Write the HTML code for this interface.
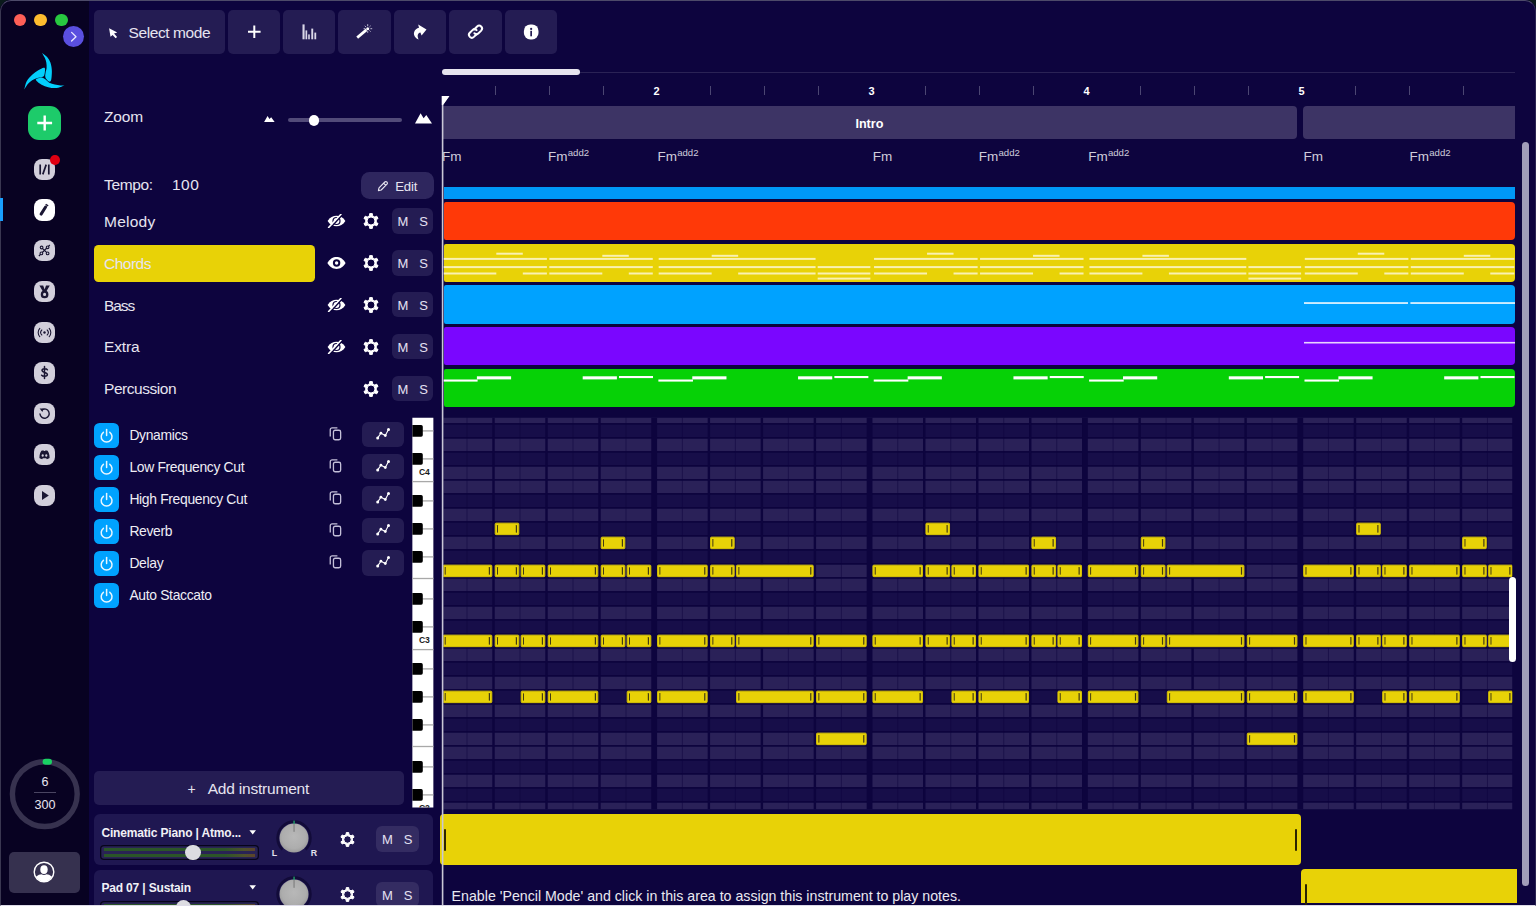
<!DOCTYPE html>
<html lang="en"><head><meta charset="utf-8"><title>Composition editor</title>
<style>
html,body{margin:0;padding:0}
body{width:1536px;height:906px;overflow:hidden;background:#0b1a1c;position:relative;
 font-family:"Liberation Sans",sans-serif;color:#ecebf3}
.abs{position:absolute}
#win{position:absolute;left:0;top:0;width:1536px;height:906px;background:#0d043e;border-radius:11px 11px 0 0;overflow:hidden}
.frame{position:absolute;left:0;top:0;width:1536px;height:906px;box-sizing:border-box;border-radius:11px 11px 0 0;
 border-top:1.3px solid #4d4a69;border-left:1.2px solid #3a3751;border-right:1.2px solid #2b2552;border-bottom:1.4px solid #dddbe8;z-index:60;pointer-events:none}
.rn{font-weight:bold;font-size:11px;line-height:14px;text-align:center;color:#fff}
.sec{background:#3d3465;display:flex;align-items:center;justify-content:center}
.sec span{font-weight:bold;font-size:12.6px;color:#fff;position:relative;left:-0.6px;top:1.9px}
.ch{font-size:13.5px;line-height:16px;color:#cfcddb;white-space:nowrap}
.ch sup{font-size:9.6px;line-height:0;vertical-align:baseline;position:relative;top:-4.6px;left:0.2px}
.hint{font-size:14.2px;line-height:16px;color:#e9e8f0;white-space:nowrap}

.tb{position:absolute;top:10.4px;height:43.6px;width:52.6px;background:#241c53;border-radius:5px}
.tb svg{position:absolute;left:0;top:0}
.lbl{position:absolute;font-size:15.5px;line-height:20px;color:#e6e4f0;white-space:nowrap;letter-spacing:-0.15px}
.msb{border-radius:6px;color:#e4e1f2;font-size:13px;line-height:28.4px}
.msb .m{position:absolute;left:5.1px;width:12px;text-align:center}
.msb .s{position:absolute;left:25.7px;width:12px;text-align:center}
.pw{position:absolute;left:94px;width:25.2px;height:25.2px;border-radius:5.5px;background:#00a2ff}
.fx{position:absolute;left:129.4px;font-size:13.9px;line-height:18px;color:#efeef5;white-space:nowrap;letter-spacing:-0.33px}
.gbtn{width:41.8px;height:25.2px;border-radius:6px;background:#241c53}
.card{position:absolute;left:94px;width:339.4px;background:#1f1751;border-radius:6px}
.inm{position:absolute;font-weight:bold;font-size:12px;line-height:16px;color:#f1f0f6;white-space:nowrap;letter-spacing:-0.16px}
.lr{position:absolute;font-weight:bold;font-size:8.8px;line-height:10px;color:#e4e2ee}

#side{position:absolute;left:0;top:0;width:88.8px;height:906px;background:#080222}
.sq{position:absolute;left:33.9px;width:20.9px;height:21.4px;border-radius:8px;background:#d2cfdb}
.sq svg{position:absolute;left:0;top:0}
.cnt{position:absolute;left:24px;width:42px;text-align:center;font-size:12.6px;line-height:14px;color:#e8e6f0}
</style></head><body>
<div id="win">
<svg class="abs" style="left:0;top:0" width="1536" height="906" viewBox="0 0 1536 906">
<defs><clipPath id="gc"><rect x="443.4" y="417.8" width="1068.9" height="391.5"/></clipPath></defs>
<g clip-path="url(#gc)">
<rect x="443" y="802.75" width="1075" height="12.3" fill="#2a2158"/>
<rect x="443" y="788.75" width="1075" height="12.3" fill="#170e49"/>
<rect x="443" y="774.75" width="1075" height="12.3" fill="#2a2158"/>
<rect x="443" y="760.75" width="1075" height="12.3" fill="#170e49"/>
<rect x="443" y="746.75" width="1075" height="12.3" fill="#2a2158"/>
<rect x="443" y="732.75" width="1075" height="12.3" fill="#2a2158"/>
<rect x="443" y="718.75" width="1075" height="12.3" fill="#170e49"/>
<rect x="443" y="704.75" width="1075" height="12.3" fill="#2a2158"/>
<rect x="443" y="690.75" width="1075" height="12.3" fill="#170e49"/>
<rect x="443" y="676.75" width="1075" height="12.3" fill="#2a2158"/>
<rect x="443" y="662.75" width="1075" height="12.3" fill="#170e49"/>
<rect x="443" y="648.75" width="1075" height="12.3" fill="#2a2158"/>
<rect x="443" y="634.75" width="1075" height="12.3" fill="#2a2158"/>
<rect x="443" y="620.75" width="1075" height="12.3" fill="#170e49"/>
<rect x="443" y="606.75" width="1075" height="12.3" fill="#2a2158"/>
<rect x="443" y="592.75" width="1075" height="12.3" fill="#170e49"/>
<rect x="443" y="578.75" width="1075" height="12.3" fill="#2a2158"/>
<rect x="443" y="564.75" width="1075" height="12.3" fill="#2a2158"/>
<rect x="443" y="550.75" width="1075" height="12.3" fill="#170e49"/>
<rect x="443" y="536.75" width="1075" height="12.3" fill="#2a2158"/>
<rect x="443" y="522.75" width="1075" height="12.3" fill="#170e49"/>
<rect x="443" y="508.75" width="1075" height="12.3" fill="#2a2158"/>
<rect x="443" y="494.75" width="1075" height="12.3" fill="#170e49"/>
<rect x="443" y="480.75" width="1075" height="12.3" fill="#2a2158"/>
<rect x="443" y="466.75" width="1075" height="12.3" fill="#2a2158"/>
<rect x="443" y="452.75" width="1075" height="12.3" fill="#170e49"/>
<rect x="443" y="438.75" width="1075" height="12.3" fill="#2a2158"/>
<rect x="443" y="424.75" width="1075" height="12.3" fill="#170e49"/>
<rect x="443" y="410.75" width="1075" height="12.3" fill="#2a2158"/>
<rect x="466.5" y="410" width="1" height="410" fill="#0d043e" fill-opacity="0.5"/>
<rect x="492.3" y="410" width="2.4" height="410" fill="#0d043e"/>
<rect x="519.5" y="410" width="1" height="410" fill="#0d043e" fill-opacity="0.5"/>
<rect x="545.3" y="410" width="2.4" height="410" fill="#0d043e"/>
<rect x="572.5" y="410" width="1" height="410" fill="#0d043e" fill-opacity="0.5"/>
<rect x="598.3" y="410" width="2.4" height="410" fill="#0d043e"/>
<rect x="625.5" y="410" width="1" height="410" fill="#0d043e" fill-opacity="0.5"/>
<rect x="651.3" y="410" width="5.77" height="410" fill="#0d043e"/>
<rect x="681.87" y="410" width="1" height="410" fill="#0d043e" fill-opacity="0.5"/>
<rect x="707.67" y="410" width="2.4" height="410" fill="#0d043e"/>
<rect x="734.87" y="410" width="1" height="410" fill="#0d043e" fill-opacity="0.5"/>
<rect x="760.67" y="410" width="2.4" height="410" fill="#0d043e"/>
<rect x="787.87" y="410" width="1" height="410" fill="#0d043e" fill-opacity="0.5"/>
<rect x="813.67" y="410" width="2.4" height="410" fill="#0d043e"/>
<rect x="840.87" y="410" width="1" height="410" fill="#0d043e" fill-opacity="0.5"/>
<rect x="866.67" y="410" width="5.77" height="410" fill="#0d043e"/>
<rect x="897.24" y="410" width="1" height="410" fill="#0d043e" fill-opacity="0.5"/>
<rect x="923.04" y="410" width="2.4" height="410" fill="#0d043e"/>
<rect x="950.24" y="410" width="1" height="410" fill="#0d043e" fill-opacity="0.5"/>
<rect x="976.04" y="410" width="2.4" height="410" fill="#0d043e"/>
<rect x="1003.24" y="410" width="1" height="410" fill="#0d043e" fill-opacity="0.5"/>
<rect x="1029.04" y="410" width="2.4" height="410" fill="#0d043e"/>
<rect x="1056.24" y="410" width="1" height="410" fill="#0d043e" fill-opacity="0.5"/>
<rect x="1082.04" y="410" width="5.77" height="410" fill="#0d043e"/>
<rect x="1112.61" y="410" width="1" height="410" fill="#0d043e" fill-opacity="0.5"/>
<rect x="1138.41" y="410" width="2.4" height="410" fill="#0d043e"/>
<rect x="1165.61" y="410" width="1" height="410" fill="#0d043e" fill-opacity="0.5"/>
<rect x="1191.41" y="410" width="2.4" height="410" fill="#0d043e"/>
<rect x="1218.61" y="410" width="1" height="410" fill="#0d043e" fill-opacity="0.5"/>
<rect x="1244.41" y="410" width="2.4" height="410" fill="#0d043e"/>
<rect x="1271.61" y="410" width="1" height="410" fill="#0d043e" fill-opacity="0.5"/>
<rect x="1297.41" y="410" width="5.77" height="410" fill="#0d043e"/>
<rect x="1327.98" y="410" width="1" height="410" fill="#0d043e" fill-opacity="0.5"/>
<rect x="1353.78" y="410" width="2.4" height="410" fill="#0d043e"/>
<rect x="1380.98" y="410" width="1" height="410" fill="#0d043e" fill-opacity="0.5"/>
<rect x="1406.78" y="410" width="2.4" height="410" fill="#0d043e"/>
<rect x="1433.98" y="410" width="1" height="410" fill="#0d043e" fill-opacity="0.5"/>
<rect x="1459.78" y="410" width="2.4" height="410" fill="#0d043e"/>
<rect x="1486.98" y="410" width="1" height="410" fill="#0d043e" fill-opacity="0.5"/>
<rect x="1512.78" y="410" width="5.77" height="410" fill="#0d043e"/>
<rect x="1543.35" y="410" width="1" height="410" fill="#0d043e" fill-opacity="0.5"/>
</g>
<g clip-path="url(#gc)">
<rect x="495.2" y="523.15" width="23.6" height="11.5" rx="0.9" fill="#e8d207" stroke="#d3bf04" stroke-width="1"/>
<rect x="497" y="525.1" width="1" height="7.6" rx="0.4" fill="#423a12"/>
<rect x="515.8" y="525.1" width="1.2" height="7.6" rx="0.4" fill="#423a12"/>
<rect x="601.2" y="537.15" width="23.6" height="11.5" rx="0.9" fill="#e8d207" stroke="#d3bf04" stroke-width="1"/>
<rect x="603" y="539.1" width="1" height="7.6" rx="0.4" fill="#423a12"/>
<rect x="621.8" y="539.1" width="1.2" height="7.6" rx="0.4" fill="#423a12"/>
<rect x="710.57" y="537.15" width="23.6" height="11.5" rx="0.9" fill="#e8d207" stroke="#d3bf04" stroke-width="1"/>
<rect x="712.37" y="539.1" width="1" height="7.6" rx="0.4" fill="#423a12"/>
<rect x="731.17" y="539.1" width="1.2" height="7.6" rx="0.4" fill="#423a12"/>
<rect x="442.9" y="565.15" width="48.9" height="11.5" rx="0.9" fill="#e8d207" stroke="#d3bf04" stroke-width="1"/>
<rect x="444.7" y="567.1" width="1" height="7.6" rx="0.4" fill="#423a12"/>
<rect x="488.8" y="567.1" width="1.2" height="7.6" rx="0.4" fill="#423a12"/>
<rect x="495.2" y="565.15" width="23.6" height="11.5" rx="0.9" fill="#e8d207" stroke="#d3bf04" stroke-width="1"/>
<rect x="497" y="567.1" width="1" height="7.6" rx="0.4" fill="#423a12"/>
<rect x="515.8" y="567.1" width="1.2" height="7.6" rx="0.4" fill="#423a12"/>
<rect x="521.2" y="565.15" width="23.6" height="11.5" rx="0.9" fill="#e8d207" stroke="#d3bf04" stroke-width="1"/>
<rect x="523" y="567.1" width="1" height="7.6" rx="0.4" fill="#423a12"/>
<rect x="541.8" y="567.1" width="1.2" height="7.6" rx="0.4" fill="#423a12"/>
<rect x="548.2" y="565.15" width="49.6" height="11.5" rx="0.9" fill="#e8d207" stroke="#d3bf04" stroke-width="1"/>
<rect x="550" y="567.1" width="1" height="7.6" rx="0.4" fill="#423a12"/>
<rect x="594.8" y="567.1" width="1.2" height="7.6" rx="0.4" fill="#423a12"/>
<rect x="601.2" y="565.15" width="23.6" height="11.5" rx="0.9" fill="#e8d207" stroke="#d3bf04" stroke-width="1"/>
<rect x="603" y="567.1" width="1" height="7.6" rx="0.4" fill="#423a12"/>
<rect x="621.8" y="567.1" width="1.2" height="7.6" rx="0.4" fill="#423a12"/>
<rect x="627.2" y="565.15" width="23.6" height="11.5" rx="0.9" fill="#e8d207" stroke="#d3bf04" stroke-width="1"/>
<rect x="629" y="567.1" width="1" height="7.6" rx="0.4" fill="#423a12"/>
<rect x="647.8" y="567.1" width="1.2" height="7.6" rx="0.4" fill="#423a12"/>
<rect x="657.57" y="565.15" width="49.6" height="11.5" rx="0.9" fill="#e8d207" stroke="#d3bf04" stroke-width="1"/>
<rect x="659.37" y="567.1" width="1" height="7.6" rx="0.4" fill="#423a12"/>
<rect x="704.17" y="567.1" width="1.2" height="7.6" rx="0.4" fill="#423a12"/>
<rect x="710.57" y="565.15" width="23.6" height="11.5" rx="0.9" fill="#e8d207" stroke="#d3bf04" stroke-width="1"/>
<rect x="712.37" y="567.1" width="1" height="7.6" rx="0.4" fill="#423a12"/>
<rect x="731.17" y="567.1" width="1.2" height="7.6" rx="0.4" fill="#423a12"/>
<rect x="736.57" y="565.15" width="76.6" height="11.5" rx="0.9" fill="#e8d207" stroke="#d3bf04" stroke-width="1"/>
<rect x="738.37" y="567.1" width="1" height="7.6" rx="0.4" fill="#423a12"/>
<rect x="810.17" y="567.1" width="1.2" height="7.6" rx="0.4" fill="#423a12"/>
<rect x="442.9" y="635.15" width="48.9" height="11.5" rx="0.9" fill="#e8d207" stroke="#d3bf04" stroke-width="1"/>
<rect x="444.7" y="637.1" width="1" height="7.6" rx="0.4" fill="#423a12"/>
<rect x="488.8" y="637.1" width="1.2" height="7.6" rx="0.4" fill="#423a12"/>
<rect x="495.2" y="635.15" width="23.6" height="11.5" rx="0.9" fill="#e8d207" stroke="#d3bf04" stroke-width="1"/>
<rect x="497" y="637.1" width="1" height="7.6" rx="0.4" fill="#423a12"/>
<rect x="515.8" y="637.1" width="1.2" height="7.6" rx="0.4" fill="#423a12"/>
<rect x="521.2" y="635.15" width="23.6" height="11.5" rx="0.9" fill="#e8d207" stroke="#d3bf04" stroke-width="1"/>
<rect x="523" y="637.1" width="1" height="7.6" rx="0.4" fill="#423a12"/>
<rect x="541.8" y="637.1" width="1.2" height="7.6" rx="0.4" fill="#423a12"/>
<rect x="548.2" y="635.15" width="49.6" height="11.5" rx="0.9" fill="#e8d207" stroke="#d3bf04" stroke-width="1"/>
<rect x="550" y="637.1" width="1" height="7.6" rx="0.4" fill="#423a12"/>
<rect x="594.8" y="637.1" width="1.2" height="7.6" rx="0.4" fill="#423a12"/>
<rect x="601.2" y="635.15" width="23.6" height="11.5" rx="0.9" fill="#e8d207" stroke="#d3bf04" stroke-width="1"/>
<rect x="603" y="637.1" width="1" height="7.6" rx="0.4" fill="#423a12"/>
<rect x="621.8" y="637.1" width="1.2" height="7.6" rx="0.4" fill="#423a12"/>
<rect x="627.2" y="635.15" width="23.6" height="11.5" rx="0.9" fill="#e8d207" stroke="#d3bf04" stroke-width="1"/>
<rect x="629" y="637.1" width="1" height="7.6" rx="0.4" fill="#423a12"/>
<rect x="647.8" y="637.1" width="1.2" height="7.6" rx="0.4" fill="#423a12"/>
<rect x="657.57" y="635.15" width="49.6" height="11.5" rx="0.9" fill="#e8d207" stroke="#d3bf04" stroke-width="1"/>
<rect x="659.37" y="637.1" width="1" height="7.6" rx="0.4" fill="#423a12"/>
<rect x="704.17" y="637.1" width="1.2" height="7.6" rx="0.4" fill="#423a12"/>
<rect x="710.57" y="635.15" width="23.6" height="11.5" rx="0.9" fill="#e8d207" stroke="#d3bf04" stroke-width="1"/>
<rect x="712.37" y="637.1" width="1" height="7.6" rx="0.4" fill="#423a12"/>
<rect x="731.17" y="637.1" width="1.2" height="7.6" rx="0.4" fill="#423a12"/>
<rect x="736.57" y="635.15" width="76.6" height="11.5" rx="0.9" fill="#e8d207" stroke="#d3bf04" stroke-width="1"/>
<rect x="738.37" y="637.1" width="1" height="7.6" rx="0.4" fill="#423a12"/>
<rect x="810.17" y="637.1" width="1.2" height="7.6" rx="0.4" fill="#423a12"/>
<rect x="816.57" y="635.15" width="49.6" height="11.5" rx="0.9" fill="#e8d207" stroke="#d3bf04" stroke-width="1"/>
<rect x="818.37" y="637.1" width="1" height="7.6" rx="0.4" fill="#423a12"/>
<rect x="863.17" y="637.1" width="1.2" height="7.6" rx="0.4" fill="#423a12"/>
<rect x="442.9" y="691.15" width="48.9" height="11.5" rx="0.9" fill="#e8d207" stroke="#d3bf04" stroke-width="1"/>
<rect x="444.7" y="693.1" width="1" height="7.6" rx="0.4" fill="#423a12"/>
<rect x="488.8" y="693.1" width="1.2" height="7.6" rx="0.4" fill="#423a12"/>
<rect x="521.2" y="691.15" width="23.6" height="11.5" rx="0.9" fill="#e8d207" stroke="#d3bf04" stroke-width="1"/>
<rect x="523" y="693.1" width="1" height="7.6" rx="0.4" fill="#423a12"/>
<rect x="541.8" y="693.1" width="1.2" height="7.6" rx="0.4" fill="#423a12"/>
<rect x="548.2" y="691.15" width="49.6" height="11.5" rx="0.9" fill="#e8d207" stroke="#d3bf04" stroke-width="1"/>
<rect x="550" y="693.1" width="1" height="7.6" rx="0.4" fill="#423a12"/>
<rect x="594.8" y="693.1" width="1.2" height="7.6" rx="0.4" fill="#423a12"/>
<rect x="627.2" y="691.15" width="23.6" height="11.5" rx="0.9" fill="#e8d207" stroke="#d3bf04" stroke-width="1"/>
<rect x="629" y="693.1" width="1" height="7.6" rx="0.4" fill="#423a12"/>
<rect x="647.8" y="693.1" width="1.2" height="7.6" rx="0.4" fill="#423a12"/>
<rect x="657.57" y="691.15" width="49.6" height="11.5" rx="0.9" fill="#e8d207" stroke="#d3bf04" stroke-width="1"/>
<rect x="659.37" y="693.1" width="1" height="7.6" rx="0.4" fill="#423a12"/>
<rect x="704.17" y="693.1" width="1.2" height="7.6" rx="0.4" fill="#423a12"/>
<rect x="736.57" y="691.15" width="76.6" height="11.5" rx="0.9" fill="#e8d207" stroke="#d3bf04" stroke-width="1"/>
<rect x="738.37" y="693.1" width="1" height="7.6" rx="0.4" fill="#423a12"/>
<rect x="810.17" y="693.1" width="1.2" height="7.6" rx="0.4" fill="#423a12"/>
<rect x="816.57" y="691.15" width="49.6" height="11.5" rx="0.9" fill="#e8d207" stroke="#d3bf04" stroke-width="1"/>
<rect x="818.37" y="693.1" width="1" height="7.6" rx="0.4" fill="#423a12"/>
<rect x="863.17" y="693.1" width="1.2" height="7.6" rx="0.4" fill="#423a12"/>
<rect x="816.57" y="733.15" width="49.6" height="11.5" rx="0.9" fill="#e8d207" stroke="#d3bf04" stroke-width="1"/>
<rect x="818.37" y="735.1" width="1" height="7.6" rx="0.4" fill="#423a12"/>
<rect x="863.17" y="735.1" width="1.2" height="7.6" rx="0.4" fill="#423a12"/>
<rect x="925.94" y="523.15" width="23.6" height="11.5" rx="0.9" fill="#e8d207" stroke="#d3bf04" stroke-width="1"/>
<rect x="927.74" y="525.1" width="1" height="7.6" rx="0.4" fill="#423a12"/>
<rect x="946.54" y="525.1" width="1.2" height="7.6" rx="0.4" fill="#423a12"/>
<rect x="1031.94" y="537.15" width="23.6" height="11.5" rx="0.9" fill="#e8d207" stroke="#d3bf04" stroke-width="1"/>
<rect x="1033.74" y="539.1" width="1" height="7.6" rx="0.4" fill="#423a12"/>
<rect x="1052.54" y="539.1" width="1.2" height="7.6" rx="0.4" fill="#423a12"/>
<rect x="1141.31" y="537.15" width="23.6" height="11.5" rx="0.9" fill="#e8d207" stroke="#d3bf04" stroke-width="1"/>
<rect x="1143.11" y="539.1" width="1" height="7.6" rx="0.4" fill="#423a12"/>
<rect x="1161.91" y="539.1" width="1.2" height="7.6" rx="0.4" fill="#423a12"/>
<rect x="872.94" y="565.15" width="49.6" height="11.5" rx="0.9" fill="#e8d207" stroke="#d3bf04" stroke-width="1"/>
<rect x="874.74" y="567.1" width="1" height="7.6" rx="0.4" fill="#423a12"/>
<rect x="919.54" y="567.1" width="1.2" height="7.6" rx="0.4" fill="#423a12"/>
<rect x="925.94" y="565.15" width="23.6" height="11.5" rx="0.9" fill="#e8d207" stroke="#d3bf04" stroke-width="1"/>
<rect x="927.74" y="567.1" width="1" height="7.6" rx="0.4" fill="#423a12"/>
<rect x="946.54" y="567.1" width="1.2" height="7.6" rx="0.4" fill="#423a12"/>
<rect x="951.94" y="565.15" width="23.6" height="11.5" rx="0.9" fill="#e8d207" stroke="#d3bf04" stroke-width="1"/>
<rect x="953.74" y="567.1" width="1" height="7.6" rx="0.4" fill="#423a12"/>
<rect x="972.54" y="567.1" width="1.2" height="7.6" rx="0.4" fill="#423a12"/>
<rect x="978.94" y="565.15" width="49.6" height="11.5" rx="0.9" fill="#e8d207" stroke="#d3bf04" stroke-width="1"/>
<rect x="980.74" y="567.1" width="1" height="7.6" rx="0.4" fill="#423a12"/>
<rect x="1025.54" y="567.1" width="1.2" height="7.6" rx="0.4" fill="#423a12"/>
<rect x="1031.94" y="565.15" width="23.6" height="11.5" rx="0.9" fill="#e8d207" stroke="#d3bf04" stroke-width="1"/>
<rect x="1033.74" y="567.1" width="1" height="7.6" rx="0.4" fill="#423a12"/>
<rect x="1052.54" y="567.1" width="1.2" height="7.6" rx="0.4" fill="#423a12"/>
<rect x="1057.94" y="565.15" width="23.6" height="11.5" rx="0.9" fill="#e8d207" stroke="#d3bf04" stroke-width="1"/>
<rect x="1059.74" y="567.1" width="1" height="7.6" rx="0.4" fill="#423a12"/>
<rect x="1078.54" y="567.1" width="1.2" height="7.6" rx="0.4" fill="#423a12"/>
<rect x="1088.31" y="565.15" width="49.6" height="11.5" rx="0.9" fill="#e8d207" stroke="#d3bf04" stroke-width="1"/>
<rect x="1090.11" y="567.1" width="1" height="7.6" rx="0.4" fill="#423a12"/>
<rect x="1134.91" y="567.1" width="1.2" height="7.6" rx="0.4" fill="#423a12"/>
<rect x="1141.31" y="565.15" width="23.6" height="11.5" rx="0.9" fill="#e8d207" stroke="#d3bf04" stroke-width="1"/>
<rect x="1143.11" y="567.1" width="1" height="7.6" rx="0.4" fill="#423a12"/>
<rect x="1161.91" y="567.1" width="1.2" height="7.6" rx="0.4" fill="#423a12"/>
<rect x="1167.31" y="565.15" width="76.6" height="11.5" rx="0.9" fill="#e8d207" stroke="#d3bf04" stroke-width="1"/>
<rect x="1169.11" y="567.1" width="1" height="7.6" rx="0.4" fill="#423a12"/>
<rect x="1240.91" y="567.1" width="1.2" height="7.6" rx="0.4" fill="#423a12"/>
<rect x="872.94" y="635.15" width="49.6" height="11.5" rx="0.9" fill="#e8d207" stroke="#d3bf04" stroke-width="1"/>
<rect x="874.74" y="637.1" width="1" height="7.6" rx="0.4" fill="#423a12"/>
<rect x="919.54" y="637.1" width="1.2" height="7.6" rx="0.4" fill="#423a12"/>
<rect x="925.94" y="635.15" width="23.6" height="11.5" rx="0.9" fill="#e8d207" stroke="#d3bf04" stroke-width="1"/>
<rect x="927.74" y="637.1" width="1" height="7.6" rx="0.4" fill="#423a12"/>
<rect x="946.54" y="637.1" width="1.2" height="7.6" rx="0.4" fill="#423a12"/>
<rect x="951.94" y="635.15" width="23.6" height="11.5" rx="0.9" fill="#e8d207" stroke="#d3bf04" stroke-width="1"/>
<rect x="953.74" y="637.1" width="1" height="7.6" rx="0.4" fill="#423a12"/>
<rect x="972.54" y="637.1" width="1.2" height="7.6" rx="0.4" fill="#423a12"/>
<rect x="978.94" y="635.15" width="49.6" height="11.5" rx="0.9" fill="#e8d207" stroke="#d3bf04" stroke-width="1"/>
<rect x="980.74" y="637.1" width="1" height="7.6" rx="0.4" fill="#423a12"/>
<rect x="1025.54" y="637.1" width="1.2" height="7.6" rx="0.4" fill="#423a12"/>
<rect x="1031.94" y="635.15" width="23.6" height="11.5" rx="0.9" fill="#e8d207" stroke="#d3bf04" stroke-width="1"/>
<rect x="1033.74" y="637.1" width="1" height="7.6" rx="0.4" fill="#423a12"/>
<rect x="1052.54" y="637.1" width="1.2" height="7.6" rx="0.4" fill="#423a12"/>
<rect x="1057.94" y="635.15" width="23.6" height="11.5" rx="0.9" fill="#e8d207" stroke="#d3bf04" stroke-width="1"/>
<rect x="1059.74" y="637.1" width="1" height="7.6" rx="0.4" fill="#423a12"/>
<rect x="1078.54" y="637.1" width="1.2" height="7.6" rx="0.4" fill="#423a12"/>
<rect x="1088.31" y="635.15" width="49.6" height="11.5" rx="0.9" fill="#e8d207" stroke="#d3bf04" stroke-width="1"/>
<rect x="1090.11" y="637.1" width="1" height="7.6" rx="0.4" fill="#423a12"/>
<rect x="1134.91" y="637.1" width="1.2" height="7.6" rx="0.4" fill="#423a12"/>
<rect x="1141.31" y="635.15" width="23.6" height="11.5" rx="0.9" fill="#e8d207" stroke="#d3bf04" stroke-width="1"/>
<rect x="1143.11" y="637.1" width="1" height="7.6" rx="0.4" fill="#423a12"/>
<rect x="1161.91" y="637.1" width="1.2" height="7.6" rx="0.4" fill="#423a12"/>
<rect x="1167.31" y="635.15" width="76.6" height="11.5" rx="0.9" fill="#e8d207" stroke="#d3bf04" stroke-width="1"/>
<rect x="1169.11" y="637.1" width="1" height="7.6" rx="0.4" fill="#423a12"/>
<rect x="1240.91" y="637.1" width="1.2" height="7.6" rx="0.4" fill="#423a12"/>
<rect x="1247.31" y="635.15" width="49.6" height="11.5" rx="0.9" fill="#e8d207" stroke="#d3bf04" stroke-width="1"/>
<rect x="1249.11" y="637.1" width="1" height="7.6" rx="0.4" fill="#423a12"/>
<rect x="1293.91" y="637.1" width="1.2" height="7.6" rx="0.4" fill="#423a12"/>
<rect x="872.94" y="691.15" width="49.6" height="11.5" rx="0.9" fill="#e8d207" stroke="#d3bf04" stroke-width="1"/>
<rect x="874.74" y="693.1" width="1" height="7.6" rx="0.4" fill="#423a12"/>
<rect x="919.54" y="693.1" width="1.2" height="7.6" rx="0.4" fill="#423a12"/>
<rect x="951.94" y="691.15" width="23.6" height="11.5" rx="0.9" fill="#e8d207" stroke="#d3bf04" stroke-width="1"/>
<rect x="953.74" y="693.1" width="1" height="7.6" rx="0.4" fill="#423a12"/>
<rect x="972.54" y="693.1" width="1.2" height="7.6" rx="0.4" fill="#423a12"/>
<rect x="978.94" y="691.15" width="49.6" height="11.5" rx="0.9" fill="#e8d207" stroke="#d3bf04" stroke-width="1"/>
<rect x="980.74" y="693.1" width="1" height="7.6" rx="0.4" fill="#423a12"/>
<rect x="1025.54" y="693.1" width="1.2" height="7.6" rx="0.4" fill="#423a12"/>
<rect x="1057.94" y="691.15" width="23.6" height="11.5" rx="0.9" fill="#e8d207" stroke="#d3bf04" stroke-width="1"/>
<rect x="1059.74" y="693.1" width="1" height="7.6" rx="0.4" fill="#423a12"/>
<rect x="1078.54" y="693.1" width="1.2" height="7.6" rx="0.4" fill="#423a12"/>
<rect x="1088.31" y="691.15" width="49.6" height="11.5" rx="0.9" fill="#e8d207" stroke="#d3bf04" stroke-width="1"/>
<rect x="1090.11" y="693.1" width="1" height="7.6" rx="0.4" fill="#423a12"/>
<rect x="1134.91" y="693.1" width="1.2" height="7.6" rx="0.4" fill="#423a12"/>
<rect x="1167.31" y="691.15" width="76.6" height="11.5" rx="0.9" fill="#e8d207" stroke="#d3bf04" stroke-width="1"/>
<rect x="1169.11" y="693.1" width="1" height="7.6" rx="0.4" fill="#423a12"/>
<rect x="1240.91" y="693.1" width="1.2" height="7.6" rx="0.4" fill="#423a12"/>
<rect x="1247.31" y="691.15" width="49.6" height="11.5" rx="0.9" fill="#e8d207" stroke="#d3bf04" stroke-width="1"/>
<rect x="1249.11" y="693.1" width="1" height="7.6" rx="0.4" fill="#423a12"/>
<rect x="1293.91" y="693.1" width="1.2" height="7.6" rx="0.4" fill="#423a12"/>
<rect x="1247.31" y="733.15" width="49.6" height="11.5" rx="0.9" fill="#e8d207" stroke="#d3bf04" stroke-width="1"/>
<rect x="1249.11" y="735.1" width="1" height="7.6" rx="0.4" fill="#423a12"/>
<rect x="1293.91" y="735.1" width="1.2" height="7.6" rx="0.4" fill="#423a12"/>
<rect x="1356.68" y="523.15" width="23.6" height="11.5" rx="0.9" fill="#e8d207" stroke="#d3bf04" stroke-width="1"/>
<rect x="1358.48" y="525.1" width="1" height="7.6" rx="0.4" fill="#423a12"/>
<rect x="1377.28" y="525.1" width="1.2" height="7.6" rx="0.4" fill="#423a12"/>
<rect x="1462.68" y="537.15" width="23.6" height="11.5" rx="0.9" fill="#e8d207" stroke="#d3bf04" stroke-width="1"/>
<rect x="1464.48" y="539.1" width="1" height="7.6" rx="0.4" fill="#423a12"/>
<rect x="1483.28" y="539.1" width="1.2" height="7.6" rx="0.4" fill="#423a12"/>
<rect x="1303.68" y="565.15" width="49.6" height="11.5" rx="0.9" fill="#e8d207" stroke="#d3bf04" stroke-width="1"/>
<rect x="1305.48" y="567.1" width="1" height="7.6" rx="0.4" fill="#423a12"/>
<rect x="1350.28" y="567.1" width="1.2" height="7.6" rx="0.4" fill="#423a12"/>
<rect x="1356.68" y="565.15" width="23.6" height="11.5" rx="0.9" fill="#e8d207" stroke="#d3bf04" stroke-width="1"/>
<rect x="1358.48" y="567.1" width="1" height="7.6" rx="0.4" fill="#423a12"/>
<rect x="1377.28" y="567.1" width="1.2" height="7.6" rx="0.4" fill="#423a12"/>
<rect x="1382.68" y="565.15" width="23.6" height="11.5" rx="0.9" fill="#e8d207" stroke="#d3bf04" stroke-width="1"/>
<rect x="1384.48" y="567.1" width="1" height="7.6" rx="0.4" fill="#423a12"/>
<rect x="1403.28" y="567.1" width="1.2" height="7.6" rx="0.4" fill="#423a12"/>
<rect x="1409.68" y="565.15" width="49.6" height="11.5" rx="0.9" fill="#e8d207" stroke="#d3bf04" stroke-width="1"/>
<rect x="1411.48" y="567.1" width="1" height="7.6" rx="0.4" fill="#423a12"/>
<rect x="1456.28" y="567.1" width="1.2" height="7.6" rx="0.4" fill="#423a12"/>
<rect x="1462.68" y="565.15" width="23.6" height="11.5" rx="0.9" fill="#e8d207" stroke="#d3bf04" stroke-width="1"/>
<rect x="1464.48" y="567.1" width="1" height="7.6" rx="0.4" fill="#423a12"/>
<rect x="1483.28" y="567.1" width="1.2" height="7.6" rx="0.4" fill="#423a12"/>
<rect x="1488.68" y="565.15" width="23.6" height="11.5" rx="0.9" fill="#e8d207" stroke="#d3bf04" stroke-width="1"/>
<rect x="1490.48" y="567.1" width="1" height="7.6" rx="0.4" fill="#423a12"/>
<rect x="1509.28" y="567.1" width="1.2" height="7.6" rx="0.4" fill="#423a12"/>
<rect x="1303.68" y="635.15" width="49.6" height="11.5" rx="0.9" fill="#e8d207" stroke="#d3bf04" stroke-width="1"/>
<rect x="1305.48" y="637.1" width="1" height="7.6" rx="0.4" fill="#423a12"/>
<rect x="1350.28" y="637.1" width="1.2" height="7.6" rx="0.4" fill="#423a12"/>
<rect x="1356.68" y="635.15" width="23.6" height="11.5" rx="0.9" fill="#e8d207" stroke="#d3bf04" stroke-width="1"/>
<rect x="1358.48" y="637.1" width="1" height="7.6" rx="0.4" fill="#423a12"/>
<rect x="1377.28" y="637.1" width="1.2" height="7.6" rx="0.4" fill="#423a12"/>
<rect x="1382.68" y="635.15" width="23.6" height="11.5" rx="0.9" fill="#e8d207" stroke="#d3bf04" stroke-width="1"/>
<rect x="1384.48" y="637.1" width="1" height="7.6" rx="0.4" fill="#423a12"/>
<rect x="1403.28" y="637.1" width="1.2" height="7.6" rx="0.4" fill="#423a12"/>
<rect x="1409.68" y="635.15" width="49.6" height="11.5" rx="0.9" fill="#e8d207" stroke="#d3bf04" stroke-width="1"/>
<rect x="1411.48" y="637.1" width="1" height="7.6" rx="0.4" fill="#423a12"/>
<rect x="1456.28" y="637.1" width="1.2" height="7.6" rx="0.4" fill="#423a12"/>
<rect x="1462.68" y="635.15" width="23.6" height="11.5" rx="0.9" fill="#e8d207" stroke="#d3bf04" stroke-width="1"/>
<rect x="1464.48" y="637.1" width="1" height="7.6" rx="0.4" fill="#423a12"/>
<rect x="1483.28" y="637.1" width="1.2" height="7.6" rx="0.4" fill="#423a12"/>
<rect x="1488.68" y="635.15" width="23.6" height="11.5" rx="0.9" fill="#e8d207" stroke="#d3bf04" stroke-width="1"/>
<rect x="1490.48" y="637.1" width="1" height="7.6" rx="0.4" fill="#423a12"/>
<rect x="1509.28" y="637.1" width="1.2" height="7.6" rx="0.4" fill="#423a12"/>
<rect x="1303.68" y="691.15" width="49.6" height="11.5" rx="0.9" fill="#e8d207" stroke="#d3bf04" stroke-width="1"/>
<rect x="1305.48" y="693.1" width="1" height="7.6" rx="0.4" fill="#423a12"/>
<rect x="1350.28" y="693.1" width="1.2" height="7.6" rx="0.4" fill="#423a12"/>
<rect x="1382.68" y="691.15" width="23.6" height="11.5" rx="0.9" fill="#e8d207" stroke="#d3bf04" stroke-width="1"/>
<rect x="1384.48" y="693.1" width="1" height="7.6" rx="0.4" fill="#423a12"/>
<rect x="1403.28" y="693.1" width="1.2" height="7.6" rx="0.4" fill="#423a12"/>
<rect x="1409.68" y="691.15" width="49.6" height="11.5" rx="0.9" fill="#e8d207" stroke="#d3bf04" stroke-width="1"/>
<rect x="1411.48" y="693.1" width="1" height="7.6" rx="0.4" fill="#423a12"/>
<rect x="1456.28" y="693.1" width="1.2" height="7.6" rx="0.4" fill="#423a12"/>
<rect x="1488.68" y="691.15" width="23.6" height="11.5" rx="0.9" fill="#e8d207" stroke="#d3bf04" stroke-width="1"/>
<rect x="1490.48" y="693.1" width="1" height="7.6" rx="0.4" fill="#423a12"/>
<rect x="1509.28" y="693.1" width="1.2" height="7.6" rx="0.4" fill="#423a12"/>
</g>
</svg>
<svg class="abs" style="left:0;top:0" width="1536" height="906" viewBox="0 0 1536 906">
<defs><clipPath id="pc"><rect x="412.2" y="417.8" width="21.4" height="389.8"/></clipPath></defs>
<g clip-path="url(#pc)">
<rect x="412.2" y="400" width="21.4" height="420" fill="#ffffff"/>
<rect x="422.2" y="836.25" width="11.4" height="1.3" fill="#a8a8a8"/>
<path d="M412.2 831.1 h9 a1.6 1.6 0 0 1 1.6 1.6 v8.4 a1.6 1.6 0 0 1 -1.6 1.6 h-9 z" fill="#000"/>
<rect x="412.2" y="816.95" width="21.4" height="1.3" fill="#a8a8a8"/>
<rect x="422.2" y="794.25" width="11.4" height="1.3" fill="#a8a8a8"/>
<path d="M412.2 789.1 h9 a1.6 1.6 0 0 1 1.6 1.6 v8.4 a1.6 1.6 0 0 1 -1.6 1.6 h-9 z" fill="#000"/>
<rect x="422.2" y="766.25" width="11.4" height="1.3" fill="#a8a8a8"/>
<path d="M412.2 761.1 h9 a1.6 1.6 0 0 1 1.6 1.6 v8.4 a1.6 1.6 0 0 1 -1.6 1.6 h-9 z" fill="#000"/>
<rect x="412.2" y="745.85" width="21.4" height="1.3" fill="#a8a8a8"/>
<rect x="422.2" y="724.25" width="11.4" height="1.3" fill="#a8a8a8"/>
<path d="M412.2 719.1 h9 a1.6 1.6 0 0 1 1.6 1.6 v8.4 a1.6 1.6 0 0 1 -1.6 1.6 h-9 z" fill="#000"/>
<rect x="422.2" y="696.25" width="11.4" height="1.3" fill="#a8a8a8"/>
<path d="M412.2 691.1 h9 a1.6 1.6 0 0 1 1.6 1.6 v8.4 a1.6 1.6 0 0 1 -1.6 1.6 h-9 z" fill="#000"/>
<rect x="422.2" y="668.25" width="11.4" height="1.3" fill="#a8a8a8"/>
<path d="M412.2 663.1 h9 a1.6 1.6 0 0 1 1.6 1.6 v8.4 a1.6 1.6 0 0 1 -1.6 1.6 h-9 z" fill="#000"/>
<rect x="412.2" y="648.95" width="21.4" height="1.3" fill="#a8a8a8"/>
<rect x="422.2" y="626.25" width="11.4" height="1.3" fill="#a8a8a8"/>
<path d="M412.2 621.1 h9 a1.6 1.6 0 0 1 1.6 1.6 v8.4 a1.6 1.6 0 0 1 -1.6 1.6 h-9 z" fill="#000"/>
<rect x="422.2" y="598.25" width="11.4" height="1.3" fill="#a8a8a8"/>
<path d="M412.2 593.1 h9 a1.6 1.6 0 0 1 1.6 1.6 v8.4 a1.6 1.6 0 0 1 -1.6 1.6 h-9 z" fill="#000"/>
<rect x="412.2" y="577.85" width="21.4" height="1.3" fill="#a8a8a8"/>
<rect x="422.2" y="556.25" width="11.4" height="1.3" fill="#a8a8a8"/>
<path d="M412.2 551.1 h9 a1.6 1.6 0 0 1 1.6 1.6 v8.4 a1.6 1.6 0 0 1 -1.6 1.6 h-9 z" fill="#000"/>
<rect x="422.2" y="528.25" width="11.4" height="1.3" fill="#a8a8a8"/>
<path d="M412.2 523.1 h9 a1.6 1.6 0 0 1 1.6 1.6 v8.4 a1.6 1.6 0 0 1 -1.6 1.6 h-9 z" fill="#000"/>
<rect x="422.2" y="500.25" width="11.4" height="1.3" fill="#a8a8a8"/>
<path d="M412.2 495.1 h9 a1.6 1.6 0 0 1 1.6 1.6 v8.4 a1.6 1.6 0 0 1 -1.6 1.6 h-9 z" fill="#000"/>
<rect x="412.2" y="480.95" width="21.4" height="1.3" fill="#a8a8a8"/>
<rect x="422.2" y="458.25" width="11.4" height="1.3" fill="#a8a8a8"/>
<path d="M412.2 453.1 h9 a1.6 1.6 0 0 1 1.6 1.6 v8.4 a1.6 1.6 0 0 1 -1.6 1.6 h-9 z" fill="#000"/>
<rect x="422.2" y="430.25" width="11.4" height="1.3" fill="#a8a8a8"/>
<path d="M412.2 425.1 h9 a1.6 1.6 0 0 1 1.6 1.6 v8.4 a1.6 1.6 0 0 1 -1.6 1.6 h-9 z" fill="#000"/>
<rect x="412.2" y="409.85" width="21.4" height="1.3" fill="#a8a8a8"/>
<rect x="422.2" y="388.25" width="11.4" height="1.3" fill="#a8a8a8"/>
<path d="M412.2 383.1 h9 a1.6 1.6 0 0 1 1.6 1.6 v8.4 a1.6 1.6 0 0 1 -1.6 1.6 h-9 z" fill="#000"/>
<text x="424.4" y="474.5" font-family="Liberation Sans, sans-serif" font-weight="bold" font-size="8.6" fill="#1a1a1a" text-anchor="middle">C4</text>
<text x="424.4" y="642.5" font-family="Liberation Sans, sans-serif" font-weight="bold" font-size="8.6" fill="#1a1a1a" text-anchor="middle">C3</text>
<text x="424.4" y="810.5" font-family="Liberation Sans, sans-serif" font-weight="bold" font-size="8.6" fill="#1a1a1a" text-anchor="middle">C2</text>
</g></svg>
<div class="abs" style="left:443.6px;top:186.8px;width:1071.4px;height:12px;background:#0098f7"></div>
<div class="abs" style="left:443.6px;top:201.9px;width:1071.4px;height:38.2px;background:#ff3908;border-radius:2px 4px 4px 2px"></div>
<div class="abs" style="left:443.6px;top:243.68px;width:1071.4px;height:38.2px;background:#e8d207;border-radius:2px 4px 4px 2px"></div>
<div class="abs" style="left:443.6px;top:285.46px;width:1071.4px;height:38.2px;background:#00a2ff;border-radius:2px 4px 4px 2px"></div>
<div class="abs" style="left:443.6px;top:327.24px;width:1071.4px;height:38.2px;background:#7a06ff;border-radius:2px 4px 4px 2px"></div>
<div class="abs" style="left:443.6px;top:369.02px;width:1071.4px;height:38.2px;background:#06d106;border-radius:2px 4px 4px 2px"></div>
<svg class="abs" style="left:0;top:0" width="1536" height="906" viewBox="0 0 1536 906">
<defs><clipPath id="lc"><rect x="443.6" y="180" width="1071.4" height="240"/></clipPath></defs><g clip-path="url(#lc)">
<rect x="496.3" y="252.7" width="26.5" height="2" fill="#fbf3c0" fill-opacity="0.92"/>
<rect x="602.3" y="254.8" width="26.5" height="2" fill="#fbf3c0" fill-opacity="0.92"/>
<rect x="711.67" y="254.8" width="26.5" height="2" fill="#fbf3c0" fill-opacity="0.92"/>
<rect x="443.3" y="257.9" width="103.6" height="2" fill="#fbf3c0" fill-opacity="0.92"/>
<rect x="549.3" y="257.9" width="103.5" height="2" fill="#fbf3c0" fill-opacity="0.92"/>
<rect x="658.67" y="257.9" width="156.9" height="2" fill="#fbf3c0" fill-opacity="0.92"/>
<rect x="443.3" y="266.1" width="103.6" height="2" fill="#fbf3c0" fill-opacity="0.92"/>
<rect x="549.3" y="266.1" width="103.5" height="2" fill="#fbf3c0" fill-opacity="0.92"/>
<rect x="658.67" y="266.1" width="156.9" height="2" fill="#fbf3c0" fill-opacity="0.92"/>
<rect x="817.67" y="266.1" width="52.7" height="2" fill="#fbf3c0" fill-opacity="0.92"/>
<rect x="443.3" y="272.5" width="53" height="2" fill="#fbf3c0" fill-opacity="0.92"/>
<rect x="522.8" y="272.5" width="24.1" height="2" fill="#fbf3c0" fill-opacity="0.92"/>
<rect x="549.3" y="272.5" width="53" height="2" fill="#fbf3c0" fill-opacity="0.92"/>
<rect x="628.8" y="272.5" width="24" height="2" fill="#fbf3c0" fill-opacity="0.92"/>
<rect x="658.67" y="272.5" width="53" height="2" fill="#fbf3c0" fill-opacity="0.92"/>
<rect x="738.17" y="272.5" width="77.4" height="2" fill="#fbf3c0" fill-opacity="0.92"/>
<rect x="817.67" y="272.5" width="52.7" height="2" fill="#fbf3c0" fill-opacity="0.92"/>
<rect x="817.67" y="277.6" width="52.7" height="2" fill="#fbf3c0" fill-opacity="0.92"/>
<rect x="927.04" y="252.7" width="26.5" height="2" fill="#fbf3c0" fill-opacity="0.92"/>
<rect x="1033.04" y="254.8" width="26.5" height="2" fill="#fbf3c0" fill-opacity="0.92"/>
<rect x="1142.41" y="254.8" width="26.5" height="2" fill="#fbf3c0" fill-opacity="0.92"/>
<rect x="874.04" y="257.9" width="103.6" height="2" fill="#fbf3c0" fill-opacity="0.92"/>
<rect x="980.04" y="257.9" width="103.5" height="2" fill="#fbf3c0" fill-opacity="0.92"/>
<rect x="1089.41" y="257.9" width="156.9" height="2" fill="#fbf3c0" fill-opacity="0.92"/>
<rect x="874.04" y="266.1" width="103.6" height="2" fill="#fbf3c0" fill-opacity="0.92"/>
<rect x="980.04" y="266.1" width="103.5" height="2" fill="#fbf3c0" fill-opacity="0.92"/>
<rect x="1089.41" y="266.1" width="156.9" height="2" fill="#fbf3c0" fill-opacity="0.92"/>
<rect x="1248.41" y="266.1" width="52.7" height="2" fill="#fbf3c0" fill-opacity="0.92"/>
<rect x="874.04" y="272.5" width="53" height="2" fill="#fbf3c0" fill-opacity="0.92"/>
<rect x="953.54" y="272.5" width="24.1" height="2" fill="#fbf3c0" fill-opacity="0.92"/>
<rect x="980.04" y="272.5" width="53" height="2" fill="#fbf3c0" fill-opacity="0.92"/>
<rect x="1059.54" y="272.5" width="24" height="2" fill="#fbf3c0" fill-opacity="0.92"/>
<rect x="1089.41" y="272.5" width="53" height="2" fill="#fbf3c0" fill-opacity="0.92"/>
<rect x="1168.91" y="272.5" width="77.4" height="2" fill="#fbf3c0" fill-opacity="0.92"/>
<rect x="1248.41" y="272.5" width="52.7" height="2" fill="#fbf3c0" fill-opacity="0.92"/>
<rect x="1248.41" y="277.6" width="52.7" height="2" fill="#fbf3c0" fill-opacity="0.92"/>
<rect x="1357.78" y="252.7" width="26.5" height="2" fill="#fbf3c0" fill-opacity="0.92"/>
<rect x="1463.78" y="254.8" width="26.5" height="2" fill="#fbf3c0" fill-opacity="0.92"/>
<rect x="1304.78" y="257.9" width="103.6" height="2" fill="#fbf3c0" fill-opacity="0.92"/>
<rect x="1410.78" y="257.9" width="103.5" height="2" fill="#fbf3c0" fill-opacity="0.92"/>
<rect x="1304.78" y="266.1" width="103.6" height="2" fill="#fbf3c0" fill-opacity="0.92"/>
<rect x="1410.78" y="266.1" width="103.5" height="2" fill="#fbf3c0" fill-opacity="0.92"/>
<rect x="1304.78" y="272.5" width="53" height="2" fill="#fbf3c0" fill-opacity="0.92"/>
<rect x="1384.28" y="272.5" width="24.1" height="2" fill="#fbf3c0" fill-opacity="0.92"/>
<rect x="1410.78" y="272.5" width="53" height="2" fill="#fbf3c0" fill-opacity="0.92"/>
<rect x="1490.28" y="272.5" width="24" height="2" fill="#fbf3c0" fill-opacity="0.92"/>
<rect x="1304" y="302.2" width="104" height="1.7" fill="#e6f5ff"/>
<rect x="1410.4" y="302.2" width="105" height="1.7" fill="#e6f5ff"/>
<rect x="1304" y="341.9" width="212" height="1.6" fill="#e9d4ff"/>
<rect x="443" y="379.5" width="34.6" height="2.1" fill="#fff"/>
<rect x="476.9" y="376.3" width="34.2" height="3.1" fill="#fff"/>
<rect x="582.7" y="376.3" width="34.2" height="3.1" fill="#fff"/>
<rect x="619" y="376" width="34" height="2.1" fill="#fff"/>
<rect x="658.37" y="379.5" width="34.6" height="2.1" fill="#fff"/>
<rect x="692.27" y="376.3" width="34.2" height="3.1" fill="#fff"/>
<rect x="798.07" y="376.3" width="34.2" height="3.1" fill="#fff"/>
<rect x="834.37" y="376" width="34" height="2.1" fill="#fff"/>
<rect x="873.74" y="379.5" width="34.6" height="2.1" fill="#fff"/>
<rect x="907.64" y="376.3" width="34.2" height="3.1" fill="#fff"/>
<rect x="1013.44" y="376.3" width="34.2" height="3.1" fill="#fff"/>
<rect x="1049.74" y="376" width="34" height="2.1" fill="#fff"/>
<rect x="1089.11" y="379.5" width="34.6" height="2.1" fill="#fff"/>
<rect x="1123.01" y="376.3" width="34.2" height="3.1" fill="#fff"/>
<rect x="1228.81" y="376.3" width="34.2" height="3.1" fill="#fff"/>
<rect x="1265.11" y="376" width="34" height="2.1" fill="#fff"/>
<rect x="1304.48" y="379.5" width="34.6" height="2.1" fill="#fff"/>
<rect x="1338.38" y="376.3" width="34.2" height="3.1" fill="#fff"/>
<rect x="1444.18" y="376.3" width="34.2" height="3.1" fill="#fff"/>
<rect x="1480.48" y="376" width="34" height="2.1" fill="#fff"/>
</g></svg>
<div class="abs" style="left:442px;top:71.6px;width:1073px;height:1px;background:#2a2255"></div>
<div class="abs" style="left:441.7px;top:68.8px;width:138px;height:6.4px;border-radius:4px;background:#e6e4ee"></div>
<div class="abs" style="left:495.15px;top:86.2px;width:1.2px;height:8.8px;background:#4b4672"></div>
<div class="abs" style="left:548.9px;top:86.2px;width:1.2px;height:8.8px;background:#4b4672"></div>
<div class="abs" style="left:602.65px;top:86.2px;width:1.2px;height:8.8px;background:#4b4672"></div>
<div class="abs rn" style="left:646.5px;top:84px;width:20px">2</div>
<div class="abs" style="left:710.15px;top:86.2px;width:1.2px;height:8.8px;background:#4b4672"></div>
<div class="abs" style="left:763.9px;top:86.2px;width:1.2px;height:8.8px;background:#4b4672"></div>
<div class="abs" style="left:817.65px;top:86.2px;width:1.2px;height:8.8px;background:#4b4672"></div>
<div class="abs rn" style="left:861.5px;top:84px;width:20px">3</div>
<div class="abs" style="left:925.15px;top:86.2px;width:1.2px;height:8.8px;background:#4b4672"></div>
<div class="abs" style="left:978.9px;top:86.2px;width:1.2px;height:8.8px;background:#4b4672"></div>
<div class="abs" style="left:1032.65px;top:86.2px;width:1.2px;height:8.8px;background:#4b4672"></div>
<div class="abs rn" style="left:1076.5px;top:84px;width:20px">4</div>
<div class="abs" style="left:1140.15px;top:86.2px;width:1.2px;height:8.8px;background:#4b4672"></div>
<div class="abs" style="left:1193.9px;top:86.2px;width:1.2px;height:8.8px;background:#4b4672"></div>
<div class="abs" style="left:1247.65px;top:86.2px;width:1.2px;height:8.8px;background:#4b4672"></div>
<div class="abs rn" style="left:1291.5px;top:84px;width:20px">5</div>
<div class="abs" style="left:1355.15px;top:86.2px;width:1.2px;height:8.8px;background:#4b4672"></div>
<div class="abs" style="left:1408.9px;top:86.2px;width:1.2px;height:8.8px;background:#4b4672"></div>
<div class="abs" style="left:1462.65px;top:86.2px;width:1.2px;height:8.8px;background:#4b4672"></div>
<div class="abs sec" style="left:443.4px;top:105.9px;width:853.2px;height:32.8px;border-radius:0 4px 4px 0"><span>Intro</span></div>
<div class="abs sec" style="left:1303.3px;top:105.9px;width:211.7px;height:32.8px;border-radius:4px 0 0 4px"></div>
<div class="abs ch" style="left:442.1px;top:148.9px">Fm</div>
<div class="abs ch" style="left:548.1px;top:148.9px">Fm<sup>add2</sup></div>
<div class="abs ch" style="left:657.47px;top:148.9px">Fm<sup>add2</sup></div>
<div class="abs ch" style="left:872.84px;top:148.9px">Fm</div>
<div class="abs ch" style="left:978.84px;top:148.9px">Fm<sup>add2</sup></div>
<div class="abs ch" style="left:1088.21px;top:148.9px">Fm<sup>add2</sup></div>
<div class="abs ch" style="left:1303.58px;top:148.9px">Fm</div>
<div class="abs ch" style="left:1409.58px;top:148.9px">Fm<sup>add2</sup></div>
<div class="abs" style="left:93.8px;top:10.4px;width:131.4px;height:43.6px;background:#241c53;border-radius:5px"></div>
<svg class="abs" style="left:107px;top:26px" width="12" height="14" viewBox="0 0 12 14"><path d="M2.1 2.2 L10.3 6.4 L7 7.6 L10.1 11 L8.6 12.3 L5.6 8.9 L3.5 10.8Z" fill="#fff"/></svg>
<div class="lbl" style="left:128.6px;top:23.2px;font-size:15.5px;letter-spacing:-0.42px">Select mode</div>
<div class="tb" style="left:227.5px"><svg width="52.6" height="43.6" viewBox="0 0 52.6 43.6"><path d="M26.3 15.4 V28 M20 21.7 H32.6" stroke="#fff" stroke-width="2" fill="none"/></svg></div>
<div class="tb" style="left:282.9px"><svg width="52.6" height="43.6" viewBox="0 0 52.6 43.6"><g fill="#dad7e8"><rect x="19.5" y="14.4" width="2.1" height="14.9"/><rect x="22.5" y="20.4" width="1.7" height="8.9"/><rect x="25.2" y="24.4" width="1.6" height="4.9"/><rect x="28.3" y="18.6" width="1.9" height="10.7"/><rect x="31.4" y="22.6" width="1.8" height="6.7"/></g></svg></div>
<div class="tb" style="left:338.3px"><svg width="52.6" height="43.6" viewBox="0 0 52.6 43.6"><path d="M19.2 27.6 L28.4 19.9" stroke="#fff" stroke-width="2.7" stroke-linecap="butt" fill="none"/><circle cx="29.7" cy="18.7" r="1.5" fill="#fff"/><path d="M29.7 14.2 v2 M29.7 21.2 v1.6 M25.6 18.7 h1.8 M32.4 18.7 h1.8 M26.8 15.8 l1.1 1.1 M32.6 15.8 l-1.1 1.1 M32.6 21.6 l-1.1 -1.1" stroke="#e6e3f2" stroke-width="0.8" fill="none"/></svg></div>
<div class="tb" style="left:393.7px"><svg width="52.6" height="43.6" viewBox="0 0 52.6 43.6"><path d="M24.2 14.6 L32.5 19.5 L27.6 25.6 L26.4 22.5 C23.8 23.2 22.8 25.8 24.7 29.5 C19.6 27.8 18.4 22.4 22 19.3 C22.9 18.5 23.9 18 25 17.7 Z" fill="#fff"/></svg></div>
<div class="tb" style="left:449.2px"><svg width="52.6" height="43.6" viewBox="0 0 52.6 43.6"><g fill="none" stroke="#fff" stroke-width="2" stroke-linecap="round"><path d="M25.4 19.2 l2.7 -2.7 a2.9 2.9 0 0 1 4.1 4.1 l-2.7 2.7 a2.9 2.9 0 0 1 -4.1 0"/><path d="M27.6 24.2 l-2.7 2.7 a2.9 2.9 0 0 1 -4.1 -4.1 l2.7 -2.7 a2.9 2.9 0 0 1 4.1 0"/></g></svg></div>
<div class="tb" style="left:504.6px"><svg width="52.6" height="43.6" viewBox="0 0 52.6 43.6"><rect x="18.9" y="14.5" width="14.6" height="15" rx="6.4" fill="#fff"/><rect x="25.3" y="20.8" width="1.7" height="5.5" fill="#241c53"/><circle cx="26.15" cy="18.9" r="1.1" fill="#241c53"/></svg></div>
<div class="lbl" style="left:104px;top:107.4px;letter-spacing:-0.15px">Zoom</div>
<svg class="abs" style="left:264.4px;top:115.6px" width="10.8" height="6.2" viewBox="0 0 17 10" preserveAspectRatio="none"><path d="M0 10 L5.6 0.2 L8.6 5 L11.3 2 L17 10Z" fill="#fff"/></svg>
<div class="abs" style="left:288px;top:117.8px;width:113.8px;height:4.4px;border-radius:3px;background:#524b79"></div>
<div class="abs" style="left:308.6px;top:115.2px;width:10.6px;height:10.6px;border-radius:50%;background:#fff"></div>
<svg class="abs" style="left:415.2px;top:113.2px" width="17" height="10.4" viewBox="0 0 17 10" preserveAspectRatio="none"><path d="M0 10 L5.6 0.2 L8.6 5 L11.3 2 L17 10Z" fill="#fff"/></svg>
<div class="lbl" style="left:104px;top:175.2px;letter-spacing:-0.35px">Tempo:</div>
<div class="lbl" style="left:172px;top:175.2px;letter-spacing:0.5px">100</div>
<div class="abs" style="left:361.4px;top:172.4px;width:72.4px;height:26.6px;border-radius:8.5px;background:#2e265e"></div>
<svg class="abs" style="left:377px;top:180.4px" width="12" height="12" viewBox="0 0 12 12"><path d="M1.4 10.6 L2 7.8 L7.8 2 a1.4 1.4 0 0 1 2 0 l0.2 0.2 a1.4 1.4 0 0 1 0 2 L4.2 10 Z M6.6 3.2 L8.8 5.4" fill="none" stroke="#e9e7f2" stroke-width="1.1" stroke-linejoin="round"/></svg>
<div class="lbl" style="left:395.2px;top:177px;font-size:13.2px;letter-spacing:-0.15px">Edit</div>
<div class="lbl" style="left:104px;top:212px;letter-spacing:0.25px">Melody</div>
<svg class="abs" style="left:327.3px;top:214.4px" width="19" height="14" viewBox="0 0 19 14"><path d="M0.6 7 C3 3.2 6 1.8 9.5 1.8 S16 3.2 18.4 7 C16 10.8 13 12.2 9.5 12.2 S3 10.8 0.6 7Z" fill="#fff"/><circle cx="9.5" cy="7" r="3.5" fill="none" stroke="#0d043e" stroke-width="1.2"/><path d="M3.2 14 L15.4 0.6" stroke="#0d043e" stroke-width="1.6"/><path d="M1.6 13.6 L14 0.2" stroke="#fff" stroke-width="1.5" stroke-linecap="round"/></svg>
<svg class="abs" style="left:362.8px;top:213.4px" width="16" height="16" viewBox="0 0 16 16"><path d="M6.48 2.78 L6.67 0.62 L9.33 0.62 L9.52 2.78 L11.77 4.07 L13.73 3.16 L15.06 5.46 L13.28 6.7 L13.28 9.3 L15.06 10.54 L13.73 12.84 L11.77 11.93 L9.52 13.22 L9.33 15.38 L6.67 15.38 L6.48 13.22 L4.23 11.93 L2.27 12.84 L0.94 10.54 L2.72 9.3 L2.72 6.7 L0.94 5.46 L2.27 3.16 L4.23 4.07Z M4 8 a4 4 0 1 0 8 0 a4 4 0 1 0 -8 0Z" fill="#fff" fill-rule="evenodd" stroke="#fff" stroke-width="1" stroke-linejoin="round"/></svg>
<div class="abs msb" style="background:#241c53;left:391.8px;top:208.3px;width:41.6px;height:25.6px"><span class="m">M</span><span class="s">S</span></div>
<div class="abs" style="left:93.8px;top:244.9px;width:221px;height:37.4px;border-radius:4.5px;background:#e8d207"></div>
<div class="lbl" style="left:104px;top:253.8px;letter-spacing:-0.5px">Chords</div>
<svg class="abs" style="left:327.3px;top:256.2px" width="19" height="14" viewBox="0 0 19 14"><g transform="translate(0 0.5)"><path d="M0.4 6.5 C3 2.2 6 0.6 9.5 0.6 S16 2.2 18.6 6.5 C16 10.8 13 12.4 9.5 12.4 S3 10.8 0.4 6.5Z" fill="#fff"/><circle cx="9.6" cy="6.5" r="3.7" fill="#0d043e"/><circle cx="9.6" cy="6.5" r="1.7" fill="#fff"/></g></svg>
<svg class="abs" style="left:362.8px;top:255.2px" width="16" height="16" viewBox="0 0 16 16"><path d="M6.48 2.78 L6.67 0.62 L9.33 0.62 L9.52 2.78 L11.77 4.07 L13.73 3.16 L15.06 5.46 L13.28 6.7 L13.28 9.3 L15.06 10.54 L13.73 12.84 L11.77 11.93 L9.52 13.22 L9.33 15.38 L6.67 15.38 L6.48 13.22 L4.23 11.93 L2.27 12.84 L0.94 10.54 L2.72 9.3 L2.72 6.7 L0.94 5.46 L2.27 3.16 L4.23 4.07Z M4 8 a4 4 0 1 0 8 0 a4 4 0 1 0 -8 0Z" fill="#fff" fill-rule="evenodd" stroke="#fff" stroke-width="1" stroke-linejoin="round"/></svg>
<div class="abs msb" style="background:#241c53;left:391.8px;top:250.1px;width:41.6px;height:25.6px"><span class="m">M</span><span class="s">S</span></div>
<div class="lbl" style="left:104px;top:295.6px;letter-spacing:-1.1px">Bass</div>
<svg class="abs" style="left:327.3px;top:298px" width="19" height="14" viewBox="0 0 19 14"><path d="M0.6 7 C3 3.2 6 1.8 9.5 1.8 S16 3.2 18.4 7 C16 10.8 13 12.2 9.5 12.2 S3 10.8 0.6 7Z" fill="#fff"/><circle cx="9.5" cy="7" r="3.5" fill="none" stroke="#0d043e" stroke-width="1.2"/><path d="M3.2 14 L15.4 0.6" stroke="#0d043e" stroke-width="1.6"/><path d="M1.6 13.6 L14 0.2" stroke="#fff" stroke-width="1.5" stroke-linecap="round"/></svg>
<svg class="abs" style="left:362.8px;top:297px" width="16" height="16" viewBox="0 0 16 16"><path d="M6.48 2.78 L6.67 0.62 L9.33 0.62 L9.52 2.78 L11.77 4.07 L13.73 3.16 L15.06 5.46 L13.28 6.7 L13.28 9.3 L15.06 10.54 L13.73 12.84 L11.77 11.93 L9.52 13.22 L9.33 15.38 L6.67 15.38 L6.48 13.22 L4.23 11.93 L2.27 12.84 L0.94 10.54 L2.72 9.3 L2.72 6.7 L0.94 5.46 L2.27 3.16 L4.23 4.07Z M4 8 a4 4 0 1 0 8 0 a4 4 0 1 0 -8 0Z" fill="#fff" fill-rule="evenodd" stroke="#fff" stroke-width="1" stroke-linejoin="round"/></svg>
<div class="abs msb" style="background:#241c53;left:391.8px;top:291.9px;width:41.6px;height:25.6px"><span class="m">M</span><span class="s">S</span></div>
<div class="lbl" style="left:104px;top:337.4px;letter-spacing:-0.15px">Extra</div>
<svg class="abs" style="left:327.3px;top:339.8px" width="19" height="14" viewBox="0 0 19 14"><path d="M0.6 7 C3 3.2 6 1.8 9.5 1.8 S16 3.2 18.4 7 C16 10.8 13 12.2 9.5 12.2 S3 10.8 0.6 7Z" fill="#fff"/><circle cx="9.5" cy="7" r="3.5" fill="none" stroke="#0d043e" stroke-width="1.2"/><path d="M3.2 14 L15.4 0.6" stroke="#0d043e" stroke-width="1.6"/><path d="M1.6 13.6 L14 0.2" stroke="#fff" stroke-width="1.5" stroke-linecap="round"/></svg>
<svg class="abs" style="left:362.8px;top:338.8px" width="16" height="16" viewBox="0 0 16 16"><path d="M6.48 2.78 L6.67 0.62 L9.33 0.62 L9.52 2.78 L11.77 4.07 L13.73 3.16 L15.06 5.46 L13.28 6.7 L13.28 9.3 L15.06 10.54 L13.73 12.84 L11.77 11.93 L9.52 13.22 L9.33 15.38 L6.67 15.38 L6.48 13.22 L4.23 11.93 L2.27 12.84 L0.94 10.54 L2.72 9.3 L2.72 6.7 L0.94 5.46 L2.27 3.16 L4.23 4.07Z M4 8 a4 4 0 1 0 8 0 a4 4 0 1 0 -8 0Z" fill="#fff" fill-rule="evenodd" stroke="#fff" stroke-width="1" stroke-linejoin="round"/></svg>
<div class="abs msb" style="background:#241c53;left:391.8px;top:333.7px;width:41.6px;height:25.6px"><span class="m">M</span><span class="s">S</span></div>
<div class="lbl" style="left:104px;top:379.2px;letter-spacing:-0.45px">Percussion</div>
<svg class="abs" style="left:362.8px;top:380.6px" width="16" height="16" viewBox="0 0 16 16"><path d="M6.48 2.78 L6.67 0.62 L9.33 0.62 L9.52 2.78 L11.77 4.07 L13.73 3.16 L15.06 5.46 L13.28 6.7 L13.28 9.3 L15.06 10.54 L13.73 12.84 L11.77 11.93 L9.52 13.22 L9.33 15.38 L6.67 15.38 L6.48 13.22 L4.23 11.93 L2.27 12.84 L0.94 10.54 L2.72 9.3 L2.72 6.7 L0.94 5.46 L2.27 3.16 L4.23 4.07Z M4 8 a4 4 0 1 0 8 0 a4 4 0 1 0 -8 0Z" fill="#fff" fill-rule="evenodd" stroke="#fff" stroke-width="1" stroke-linejoin="round"/></svg>
<div class="abs msb" style="background:#241c53;left:391.8px;top:375.5px;width:41.6px;height:25.6px"><span class="m">M</span><span class="s">S</span></div>
<div class="pw" style="top:422.8px"><svg width="25" height="25" viewBox="0 0 25 25"><path d="M9.4 9.3 A5.4 5.4 0 1 0 15.8 9.3" fill="none" stroke="#e8f6ff" stroke-width="1.5" stroke-linecap="round"/><path d="M12.6 6.4 V12.4" stroke="#e8f6ff" stroke-width="1.5" stroke-linecap="round"/></svg></div>
<div class="fx" style="top:425.8px">Dynamics</div>
<svg class="abs" style="left:329.4px;top:426.8px" width="13" height="15" viewBox="0 0 13 15"><rect x="4.45" y="3.25" width="7.2" height="9.5" rx="1.7" fill="none" stroke="#c3bfd8" stroke-width="1.3"/><path d="M1.25 9.4 V2.7 A1.85 1.85 0 0 1 3.1 0.85 H8.4" fill="none" stroke="#c3bfd8" stroke-width="1.3"/></svg>
<div class="abs gbtn" style="left:362.3px;top:422px"><svg width="42" height="25" viewBox="0 0 42 25"><path d="M15.7 15.9 L18.9 11.2 L23.3 13.5 L26.5 7.4" fill="none" stroke="#fff" stroke-width="1.1" stroke-linejoin="round"/><circle cx="15.7" cy="15.9" r="1.5" fill="#fff"/><circle cx="18.9" cy="11.2" r="1.4" fill="#fff"/><circle cx="23.3" cy="13.5" r="1.4" fill="#fff"/><circle cx="26.5" cy="7.4" r="1.5" fill="#fff"/></svg></div>
<div class="pw" style="top:454.88px"><svg width="25" height="25" viewBox="0 0 25 25"><path d="M9.4 9.3 A5.4 5.4 0 1 0 15.8 9.3" fill="none" stroke="#e8f6ff" stroke-width="1.5" stroke-linecap="round"/><path d="M12.6 6.4 V12.4" stroke="#e8f6ff" stroke-width="1.5" stroke-linecap="round"/></svg></div>
<div class="fx" style="top:457.88px">Low Frequency Cut</div>
<svg class="abs" style="left:329.4px;top:458.88px" width="13" height="15" viewBox="0 0 13 15"><rect x="4.45" y="3.25" width="7.2" height="9.5" rx="1.7" fill="none" stroke="#c3bfd8" stroke-width="1.3"/><path d="M1.25 9.4 V2.7 A1.85 1.85 0 0 1 3.1 0.85 H8.4" fill="none" stroke="#c3bfd8" stroke-width="1.3"/></svg>
<div class="abs gbtn" style="left:362.3px;top:454.08px"><svg width="42" height="25" viewBox="0 0 42 25"><path d="M15.7 15.9 L18.9 11.2 L23.3 13.5 L26.5 7.4" fill="none" stroke="#fff" stroke-width="1.1" stroke-linejoin="round"/><circle cx="15.7" cy="15.9" r="1.5" fill="#fff"/><circle cx="18.9" cy="11.2" r="1.4" fill="#fff"/><circle cx="23.3" cy="13.5" r="1.4" fill="#fff"/><circle cx="26.5" cy="7.4" r="1.5" fill="#fff"/></svg></div>
<div class="pw" style="top:486.96px"><svg width="25" height="25" viewBox="0 0 25 25"><path d="M9.4 9.3 A5.4 5.4 0 1 0 15.8 9.3" fill="none" stroke="#e8f6ff" stroke-width="1.5" stroke-linecap="round"/><path d="M12.6 6.4 V12.4" stroke="#e8f6ff" stroke-width="1.5" stroke-linecap="round"/></svg></div>
<div class="fx" style="top:489.96px">High Frequency Cut</div>
<svg class="abs" style="left:329.4px;top:490.96px" width="13" height="15" viewBox="0 0 13 15"><rect x="4.45" y="3.25" width="7.2" height="9.5" rx="1.7" fill="none" stroke="#c3bfd8" stroke-width="1.3"/><path d="M1.25 9.4 V2.7 A1.85 1.85 0 0 1 3.1 0.85 H8.4" fill="none" stroke="#c3bfd8" stroke-width="1.3"/></svg>
<div class="abs gbtn" style="left:362.3px;top:486.16px"><svg width="42" height="25" viewBox="0 0 42 25"><path d="M15.7 15.9 L18.9 11.2 L23.3 13.5 L26.5 7.4" fill="none" stroke="#fff" stroke-width="1.1" stroke-linejoin="round"/><circle cx="15.7" cy="15.9" r="1.5" fill="#fff"/><circle cx="18.9" cy="11.2" r="1.4" fill="#fff"/><circle cx="23.3" cy="13.5" r="1.4" fill="#fff"/><circle cx="26.5" cy="7.4" r="1.5" fill="#fff"/></svg></div>
<div class="pw" style="top:519.04px"><svg width="25" height="25" viewBox="0 0 25 25"><path d="M9.4 9.3 A5.4 5.4 0 1 0 15.8 9.3" fill="none" stroke="#e8f6ff" stroke-width="1.5" stroke-linecap="round"/><path d="M12.6 6.4 V12.4" stroke="#e8f6ff" stroke-width="1.5" stroke-linecap="round"/></svg></div>
<div class="fx" style="top:522.04px">Reverb</div>
<svg class="abs" style="left:329.4px;top:523.04px" width="13" height="15" viewBox="0 0 13 15"><rect x="4.45" y="3.25" width="7.2" height="9.5" rx="1.7" fill="none" stroke="#c3bfd8" stroke-width="1.3"/><path d="M1.25 9.4 V2.7 A1.85 1.85 0 0 1 3.1 0.85 H8.4" fill="none" stroke="#c3bfd8" stroke-width="1.3"/></svg>
<div class="abs gbtn" style="left:362.3px;top:518.24px"><svg width="42" height="25" viewBox="0 0 42 25"><path d="M15.7 15.9 L18.9 11.2 L23.3 13.5 L26.5 7.4" fill="none" stroke="#fff" stroke-width="1.1" stroke-linejoin="round"/><circle cx="15.7" cy="15.9" r="1.5" fill="#fff"/><circle cx="18.9" cy="11.2" r="1.4" fill="#fff"/><circle cx="23.3" cy="13.5" r="1.4" fill="#fff"/><circle cx="26.5" cy="7.4" r="1.5" fill="#fff"/></svg></div>
<div class="pw" style="top:551.12px"><svg width="25" height="25" viewBox="0 0 25 25"><path d="M9.4 9.3 A5.4 5.4 0 1 0 15.8 9.3" fill="none" stroke="#e8f6ff" stroke-width="1.5" stroke-linecap="round"/><path d="M12.6 6.4 V12.4" stroke="#e8f6ff" stroke-width="1.5" stroke-linecap="round"/></svg></div>
<div class="fx" style="top:554.12px">Delay</div>
<svg class="abs" style="left:329.4px;top:555.12px" width="13" height="15" viewBox="0 0 13 15"><rect x="4.45" y="3.25" width="7.2" height="9.5" rx="1.7" fill="none" stroke="#c3bfd8" stroke-width="1.3"/><path d="M1.25 9.4 V2.7 A1.85 1.85 0 0 1 3.1 0.85 H8.4" fill="none" stroke="#c3bfd8" stroke-width="1.3"/></svg>
<div class="abs gbtn" style="left:362.3px;top:550.32px"><svg width="42" height="25" viewBox="0 0 42 25"><path d="M15.7 15.9 L18.9 11.2 L23.3 13.5 L26.5 7.4" fill="none" stroke="#fff" stroke-width="1.1" stroke-linejoin="round"/><circle cx="15.7" cy="15.9" r="1.5" fill="#fff"/><circle cx="18.9" cy="11.2" r="1.4" fill="#fff"/><circle cx="23.3" cy="13.5" r="1.4" fill="#fff"/><circle cx="26.5" cy="7.4" r="1.5" fill="#fff"/></svg></div>
<div class="pw" style="top:583.2px"><svg width="25" height="25" viewBox="0 0 25 25"><path d="M9.4 9.3 A5.4 5.4 0 1 0 15.8 9.3" fill="none" stroke="#e8f6ff" stroke-width="1.5" stroke-linecap="round"/><path d="M12.6 6.4 V12.4" stroke="#e8f6ff" stroke-width="1.5" stroke-linecap="round"/></svg></div>
<div class="fx" style="top:586.2px">Auto Staccato</div>
<div class="abs" style="left:94px;top:770.6px;width:310px;height:34px;border-radius:5px;background:#241c53"></div>
<div class="lbl" style="left:187.4px;top:779.2px;font-size:15.5px;letter-spacing:-0.2px"><span style="font-size:14px;position:relative;top:-0.4px">+</span>&nbsp;&nbsp;&nbsp;Add instrument</div>
<div class="card" style="top:814.4px;height:50.8px"></div>
<div class="inm" style="left:101.4px;top:824.8px">Cinematic Piano | Atmo...</div>
<svg class="abs" style="left:248.8px;top:829.6px" width="8" height="5" viewBox="0 0 8 5"><path d="M0.4 0.2 H7 L3.7 4.6Z" fill="#fff"/></svg>
<div class="abs" style="left:99.5px;top:845.3px;width:159.3px;height:14.4px;border-radius:4px;background:#292354;box-shadow:inset 0 0 0 1.3px #07041a"></div>
<div class="abs" style="left:104.2px;top:848.2px;width:151px;height:3px;background:linear-gradient(90deg,#2a5528 0%,#2c5528 80%,#4f512b 93%,#5d432c 100%)"></div>
<div class="abs" style="left:104.2px;top:854.4px;width:151px;height:3px;background:linear-gradient(90deg,#2a5528 0%,#2c5528 80%,#4f512b 93%,#5d432c 100%)"></div>
<div class="abs" style="left:185.4px;top:844.7px;width:15.6px;height:15.6px;border-radius:50%;background:#dcdce1"></div>
<svg class="abs" style="left:273.5px;top:818.4px" width="40" height="40" viewBox="0 0 40 40"><path d="M8.4 31.6 A16.4 16.4 0 1 1 31.6 31.6" fill="none" stroke="#120b39" stroke-width="2.6"/><defs><radialGradient id="kg0" cx="0.5" cy="0.45" r="0.55"><stop offset="0" stop-color="#b8b8b8"/><stop offset="0.75" stop-color="#adadad"/><stop offset="1" stop-color="#9a9a9a"/></radialGradient></defs><circle cx="20" cy="20" r="14.5" fill="url(#kg0)"/><rect x="19.4" y="2.6" width="1.3" height="3.4" fill="#1fa468"/><rect x="19.5" y="6" width="1.1" height="7.8" fill="#7d7d7d"/></svg>
<div class="lr" style="left:271.8px;top:848.4px">L</div>
<div class="lr" style="left:310.8px;top:848.4px">R</div>
<svg class="abs" style="left:339.8px;top:831.7px" width="15" height="15" viewBox="0 0 15 15"><path d="M6.08 2.6 L6.26 0.61 L8.74 0.61 L8.92 2.6 L11.03 3.82 L12.85 2.98 L14.09 5.13 L12.45 6.28 L12.45 8.72 L14.09 9.87 L12.85 12.02 L11.03 11.18 L8.92 12.4 L8.74 14.39 L6.26 14.39 L6.08 12.4 L3.97 11.18 L2.15 12.02 L0.91 9.87 L2.55 8.72 L2.55 6.28 L0.91 5.13 L2.15 2.98 L3.97 3.82Z M3.75 7.5 a3.75 3.75 0 1 0 7.5 0 a3.75 3.75 0 1 0 -7.5 0Z" fill="#fff" fill-rule="evenodd" stroke="#fff" stroke-width="1" stroke-linejoin="round"/></svg>
<div class="abs msb" style="background:#342c62;left:376.4px;top:826.3px;width:42.4px;height:25.6px"><span class="m">M</span><span class="s">S</span></div>
<div class="card" style="top:869.8px;height:50.8px"></div>
<div class="inm" style="left:101.4px;top:880.2px">Pad 07 | Sustain</div>
<svg class="abs" style="left:248.8px;top:885px" width="8" height="5" viewBox="0 0 8 5"><path d="M0.4 0.2 H7 L3.7 4.6Z" fill="#fff"/></svg>
<div class="abs" style="left:99.5px;top:900.7px;width:159.3px;height:14.4px;border-radius:4px;background:#292354;box-shadow:inset 0 0 0 1.3px #07041a"></div>
<div class="abs" style="left:104.2px;top:903.6px;width:151px;height:3px;background:linear-gradient(90deg,#2a5528 0%,#2c5528 80%,#4f512b 93%,#5d432c 100%)"></div>
<div class="abs" style="left:104.2px;top:909.8px;width:151px;height:3px;background:linear-gradient(90deg,#2a5528 0%,#2c5528 80%,#4f512b 93%,#5d432c 100%)"></div>
<div class="abs" style="left:175.6px;top:900.1px;width:15.6px;height:15.6px;border-radius:50%;background:#dcdce1"></div>
<svg class="abs" style="left:273.5px;top:873.8px" width="40" height="40" viewBox="0 0 40 40"><path d="M8.4 31.6 A16.4 16.4 0 1 1 31.6 31.6" fill="none" stroke="#120b39" stroke-width="2.6"/><defs><radialGradient id="kg1" cx="0.5" cy="0.45" r="0.55"><stop offset="0" stop-color="#b8b8b8"/><stop offset="0.75" stop-color="#adadad"/><stop offset="1" stop-color="#9a9a9a"/></radialGradient></defs><circle cx="20" cy="20" r="14.5" fill="url(#kg1)"/><rect x="19.4" y="2.6" width="1.3" height="3.4" fill="#1fa468"/><rect x="19.5" y="6" width="1.1" height="7.8" fill="#7d7d7d"/></svg>
<div class="lr" style="left:271.8px;top:903.8px">L</div>
<div class="lr" style="left:310.8px;top:903.8px">R</div>
<svg class="abs" style="left:339.8px;top:887.1px" width="15" height="15" viewBox="0 0 15 15"><path d="M6.08 2.6 L6.26 0.61 L8.74 0.61 L8.92 2.6 L11.03 3.82 L12.85 2.98 L14.09 5.13 L12.45 6.28 L12.45 8.72 L14.09 9.87 L12.85 12.02 L11.03 11.18 L8.92 12.4 L8.74 14.39 L6.26 14.39 L6.08 12.4 L3.97 11.18 L2.15 12.02 L0.91 9.87 L2.55 8.72 L2.55 6.28 L0.91 5.13 L2.15 2.98 L3.97 3.82Z M3.75 7.5 a3.75 3.75 0 1 0 7.5 0 a3.75 3.75 0 1 0 -7.5 0Z" fill="#fff" fill-rule="evenodd" stroke="#fff" stroke-width="1" stroke-linejoin="round"/></svg>
<div class="abs msb" style="background:#342c62;left:376.4px;top:881.7px;width:42.4px;height:25.6px"><span class="m">M</span><span class="s">S</span></div>
<div class="abs" style="left:440px;top:814.4px;width:861px;height:50.8px;background:#e8d207;border-radius:4px"></div>
<div class="abs" style="left:444.2px;top:829px;width:2px;height:22px;background:#2b2400;border-radius:1px"></div>
<div class="abs" style="left:1294.6px;top:829px;width:2px;height:22px;background:#2b2400;border-radius:1px"></div>
<div class="abs" style="left:1301px;top:869.4px;width:216.4px;height:33.8px;background:#e8d207;border-radius:4px 0 0 0"></div>
<div class="abs" style="left:1305.4px;top:884px;width:2px;height:22px;background:#2b2400;border-radius:1px"></div>
<div class="abs hint" style="left:451.6px;top:887.5px">Enable 'Pencil Mode' and click in this area to assign this instrument to play notes.</div>
<div class="abs" style="left:1522.3px;top:142px;width:6.4px;height:744px;border-radius:4px;background:#a19db9"></div>
<div class="abs" style="left:1509.2px;top:577.4px;width:6.8px;height:85px;border-radius:4px;background:#ffffff"></div>
<svg class="abs" style="left:0;top:0" width="1536" height="906" viewBox="0 0 1536 906"><path d="M441.8 96 h7.6 l-6 8.4 V906 h-1.6z" fill="#c9c7d6"/><path d="M441.8 96 h7.6 l-6.4 9 h-1.2z" fill="#ffffff"/></svg>
<div id="side">
<div class="abs" style="left:13.6px;top:13.6px;width:12.7px;height:12.7px;border-radius:50%;background:#fe5f57"></div>
<div class="abs" style="left:34.4px;top:13.6px;width:12.7px;height:12.7px;border-radius:50%;background:#febc2e"></div>
<div class="abs" style="left:55.4px;top:13.6px;width:12.7px;height:12.7px;border-radius:50%;background:#28c840"></div>
<div class="abs" style="left:62.7px;top:26px;width:20.9px;height:20.9px;border-radius:50%;background:#5a4fdf"></div>
<svg class="abs" style="left:62.6px;top:26px" width="21.2" height="21.2" viewBox="0 0 21.2 21.2"><path d="M8.6 6.4 L13 10.7 L8.6 15" fill="none" stroke="#e9e7ff" stroke-width="1.3" stroke-linecap="round" stroke-linejoin="round"/></svg>
<svg class="abs" style="left:14px;top:46px" width="60" height="50" viewBox="0 0 60 50"><g fill="#03cffc"><path d="M28.1 6.9 C29.75 8.25 31.72 9.38 33.1 11 C34.48 12.62 35.62 14.48 36.4 16.6 C37.18 18.72 37.6 21.32 37.8 23.7 C38 26.08 37.78 29.02 37.6 30.9 C37.42 32.78 37.13 34.22 36.7 35 C36.27 35.78 35.6 35.78 35 35.6 C34.4 35.42 33.72 34.68 33.1 33.9 C32.48 33.12 31.55 32.13 31.3 30.9 C31.05 29.67 31.38 27.97 31.6 26.5 C31.82 25.03 32.48 23.75 32.6 22.1 C32.72 20.45 32.58 18.27 32.3 16.6 C32.02 14.93 31.6 13.72 30.9 12.1 C30.2 10.48 29.02 8.62 28.1 6.9Z"/><path d="M10.2 43.6 C11.02 40.86 11.37 37.78 12.7 35.3 C14.03 32.82 16.27 30.53 18.2 28.7 C20.13 26.87 22.4 25.45 24.3 24.3 C26.2 23.15 28.48 22.07 29.6 21.8 C30.72 21.53 30.8 21.92 31 22.7 C31.2 23.48 30.97 25.32 30.8 26.5 C30.63 27.68 30.45 29.07 30 29.8 C29.55 30.53 29.23 30.53 28.1 30.9 C26.97 31.27 24.85 31.45 23.2 32 C21.55 32.55 19.77 33.18 18.2 34.2 C16.63 35.22 15.13 36.53 13.8 38.1 C12.47 39.67 11.39 41.79 10.2 43.6Z"/><path d="M50.5 39.2 C48.42 40.03 46.37 41.25 44.2 41.7 C42.03 42.15 39.72 42.13 37.5 41.9 C35.28 41.67 33.02 41.12 30.9 40.3 C28.78 39.48 26.3 38.03 24.8 37 C23.3 35.97 22.17 34.83 21.9 34.1 C21.63 33.37 22.25 33.03 23.2 32.6 C24.15 32.17 26.32 31.42 27.6 31.5 C28.88 31.58 29.62 32.23 30.9 33.1 C32.18 33.97 33.65 35.78 35.3 36.7 C36.95 37.62 38.95 38.13 40.8 38.6 C42.65 39.07 44.78 39.4 46.4 39.5 C48.02 39.6 49.15 39.3 50.5 39.2Z"/></g></svg>
<div class="abs" style="left:27.6px;top:106.4px;width:33.4px;height:33.4px;border-radius:11px;background:#1dcb6a"></div>
<svg class="abs" style="left:27.6px;top:106.4px" width="33.4" height="33.4" viewBox="0 0 33.4 33.4"><path d="M16.7 9.6 V24.4 M9.3 17 H24.1" stroke="#fff" stroke-width="2.4" fill="none"/></svg>
<div class="sq" style="top:158.5px;background:#d2cfdb"><svg width="21" height="21" viewBox="0 0 21 21"><path d="M6.2 5.6 V15.4 M14.8 5.6 V15.4 M12.2 5.6 L8.8 15.4" stroke="#1a1633" stroke-width="1.7" fill="none"/></svg></div>
<div class="sq" style="top:199.3px;background:#ffffff"><svg width="21" height="21" viewBox="0 0 21 21"><path d="M7.1 15.1 L11.6 8" stroke="#1a1633" stroke-width="3" stroke-linecap="round" fill="none"/><path d="M12.5 6.7 L13.3 5.5" stroke="#1a1633" stroke-width="3" fill="none"/></svg></div>
<div class="sq" style="top:240.1px;background:#d2cfdb"><svg width="21" height="21" viewBox="0 0 21 21"><path d="M8.4 8.4 L12.8 12.6 M8.3 12.5 L12.8 8 M14.4 6.4 L15.8 5 M6.5 14.3 L4.9 16" stroke="#1a1633" stroke-width="1.2" fill="none"/><circle cx="7.6" cy="7.5" r="1.35" fill="none" stroke="#1a1633" stroke-width="1.1"/><circle cx="13.6" cy="7.3" r="1.35" fill="none" stroke="#1a1633" stroke-width="1.1"/><circle cx="7.4" cy="13.4" r="1.35" fill="none" stroke="#1a1633" stroke-width="1.1"/><circle cx="13.6" cy="13.4" r="1.35" fill="none" stroke="#1a1633" stroke-width="1.1"/></svg></div>
<div class="sq" style="top:280.9px;background:#d2cfdb"><svg width="21" height="21" viewBox="0 0 21 21"><path d="M5.4 4.4 H9.2 L10.6 8.6 L12 4.4 H15.8 L12.6 10 H8.6Z" fill="#1a1633"/><circle cx="10.6" cy="13.4" r="2.7" fill="#d2cfdb" stroke="#1a1633" stroke-width="2.3"/></svg></div>
<div class="sq" style="top:321.7px;background:#d2cfdb"><svg width="21" height="21" viewBox="0 0 21 21"><circle cx="10.5" cy="10.5" r="1.2" fill="#1a1633"/><path d="M7.8 8 a3.6 3.6 0 0 0 0 5 M13.2 8 a3.6 3.6 0 0 1 0 5 M5.8 6.4 a6 6 0 0 0 0 8.2 M15.2 6.4 a6 6 0 0 1 0 8.2" stroke="#1a1633" stroke-width="1.1" fill="none" stroke-linecap="round"/></svg></div>
<div class="sq" style="top:362.3px;background:#d2cfdb"><svg width="21" height="21" viewBox="0 0 21 21"><path d="M13.4 7.8 C12.6 6.6 8 6.2 8 8.6 C8 11 13.4 10 13.4 12.6 C13.4 15 8.4 14.6 7.6 13.2 M10.5 4.6 V16.4" stroke="#1a1633" stroke-width="1.5" fill="none" stroke-linecap="round"/></svg></div>
<div class="sq" style="top:403.1px;background:#d2cfdb"><svg width="21" height="21" viewBox="0 0 21 21"><path d="M8 6.8 A4.6 4.6 0 1 1 6 11" stroke="#1a1633" stroke-width="1.4" fill="none" stroke-linecap="round"/><path d="M5.6 5.4 L9.6 5.4 L8.4 9Z" fill="#1a1633"/></svg></div>
<div class="sq" style="top:443.7px;background:#d2cfdb"><svg width="21" height="21" viewBox="0 0 21 21"><path d="M5.4 14 C5.4 10.4 6.4 8 7.4 6.8 C8.2 6.4 9 6.2 9.4 6.2 L9.8 6.9 H11.2 L11.6 6.2 C12 6.2 12.8 6.4 13.6 6.8 C14.6 8 15.6 10.4 15.6 14 C14.6 14.8 13.6 15.1 12.8 15.2 L12.2 14.2 H8.8 L8.2 15.2 C7.4 15.1 6.4 14.8 5.4 14Z" fill="#1a1633"/><ellipse cx="8.7" cy="11.4" rx="1.05" ry="1.25" fill="#d2cfdb"/><ellipse cx="12.3" cy="11.4" rx="1.05" ry="1.25" fill="#d2cfdb"/></svg></div>
<div class="sq" style="top:484.5px;background:#d2cfdb"><svg width="21" height="21" viewBox="0 0 21 21"><path d="M8 6 L14.8 10.5 L8 15Z" fill="#1a1633"/></svg></div>
<div class="abs" style="left:49.8px;top:155.4px;width:9.8px;height:9.8px;border-radius:50%;background:#e00012"></div>
<div class="abs" style="left:0;top:198.4px;width:3.1px;height:22.6px;background:#199fff;z-index:70"></div>
<svg class="abs" style="left:6px;top:755px" width="78" height="78" viewBox="0 0 78 78"><circle cx="38.8" cy="39.1" r="32.4" fill="none" stroke="#37324f" stroke-width="5.4"/><rect x="36.6" y="3.8" width="9.4" height="6" rx="3" fill="#19d163"/></svg>
<div class="cnt" style="top:774.8px">6</div>
<div class="abs" style="left:34.2px;top:792.2px;width:21.6px;height:1px;background:#4a4562"></div>
<div class="cnt" style="top:797.8px">300</div>
<div class="abs" style="left:9.2px;top:851.8px;width:70.8px;height:41.4px;border-radius:5px;background:#36314f"></div>
<svg class="abs" style="left:33.4px;top:861.4px" width="22" height="22" viewBox="0 0 22 22"><defs><clipPath id="uc"><circle cx="11" cy="11" r="9.4"/></clipPath></defs><circle cx="11" cy="11" r="9.8" fill="none" stroke="#fff" stroke-width="1.4"/><g clip-path="url(#uc)"><ellipse cx="11" cy="8.6" rx="3.7" ry="4.4" fill="#fff"/><path d="M1 22 C1 15.6 5 13.6 8.4 13.2 C10 14.2 12 14.2 13.6 13.2 C17 13.6 21 15.6 21 22Z" fill="#fff"/></g></svg>
</div>
<div class="frame"></div>
</div>
</body></html>
